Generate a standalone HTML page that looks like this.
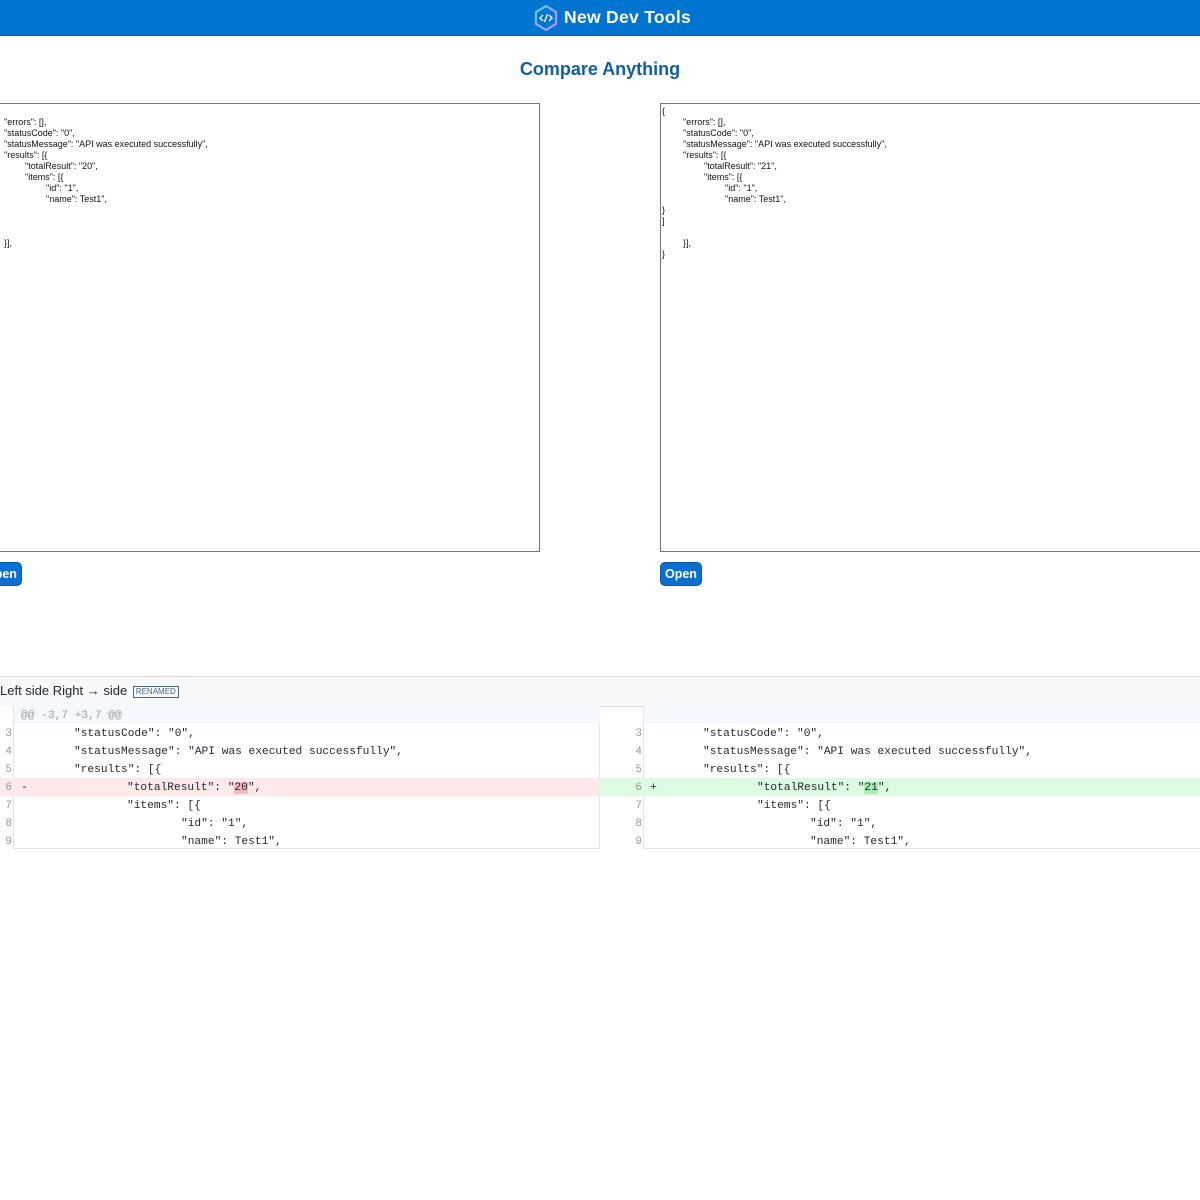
<!DOCTYPE html>
<html><head><meta charset="utf-8"><style>
*{box-sizing:border-box;margin:0;padding:0}
body{width:1200px;height:1200px;overflow:hidden;background:#fff;font-family:"Liberation Sans",sans-serif;position:relative}
.hdr{position:absolute;left:0;top:0;width:1200px;height:36px;background:#0074d1;border-bottom:1px solid #0a5fa8}
.hdr .t{position:absolute;left:564px;top:7px;color:#fff;font-size:17.5px;font-weight:bold;letter-spacing:0.3px}
.hdr svg{position:absolute;left:533px;top:4px}
h1{position:absolute;left:0;width:1200px;top:59px;text-align:center;color:#0f5fa6;font-size:18px;font-weight:bold}
.ta{position:absolute;top:103px;height:449px;border:1px solid #777;background:#fff;overflow:hidden}
.ta pre{position:absolute;font-family:"Liberation Sans",sans-serif;font-size:9px;line-height:11px;color:#111;tab-size:21px;-moz-tab-size:21px}
.btn{position:absolute;top:562px;height:24px;background:#0a6fd0;color:#fff;font-weight:bold;font-size:12.5px;border-radius:5px;line-height:23px;padding:0 4px;border:1px solid #0858a8}
.dh{position:absolute;left:0;top:676px;width:1200px;height:31px;background:#f6f8fa;border-top:1px solid #d8dde2;border-bottom:1px solid #d8dde2;font-size:13px;color:#24292e;line-height:28px}
.tag{display:inline-block;border:1px solid #4a6a80;font-size:8px;line-height:10px;padding:0 2px;color:#4a6a80;vertical-align:1px;margin-left:2px}
.row{position:absolute;height:18px;font-family:"Liberation Mono",monospace;font-size:11.2px;line-height:18px;color:#24292e;white-space:pre}
.num{position:absolute;height:18px;font-family:"Liberation Mono",monospace;font-size:11px;line-height:18px;color:#999;text-align:right}
</style></head><body>
<div class="hdr">
<svg width="26" height="28" viewBox="0 0 26 28"><defs><linearGradient id="g" x1="0" y1="0" x2="1" y2="1"><stop offset="0" stop-color="#5fd0ff"/><stop offset="1" stop-color="#b88aff"/></linearGradient></defs><path d="M13 2 L23 8 L23 20 L13 26 L3 20 L3 8 Z" fill="none" stroke="url(#g)" stroke-width="2.2"/><path d="M10 11 L7 14 L10 17 M16 11 L19 14 L16 17 M14.5 10 L11.5 18" fill="none" stroke="#fff" stroke-width="1.4"/></svg>
<div class="t">New Dev Tools</div></div>
<h1>Compare Anything</h1>
<div class="ta" style="left:-2px;width:542px"><pre style="left:-16px;top:13px">	"errors": [],
	"statusCode": "0",
	"statusMessage": "API was executed successfully",
	"results": [{
		"totalResult": "20",
		"items": [{
			"id": "1",
			"name": Test1",



	}],</pre></div>
<div class="ta" style="left:660px;width:560px"><pre style="left:1px;top:2px">{
	"errors": [],
	"statusCode": "0",
	"statusMessage": "API was executed successfully",
	"results": [{
		"totalResult": "21",
		"items": [{
			"id": "1",
			"name": Test1",
}
]

	}],
}</pre></div>
<div class="btn" style="left:-20px">Open</div>
<div class="btn" style="left:660px">Open</div>
<div class="dh">Left side Right → side <span class="tag">RENAMED</span></div>
<div style="position:absolute;left:0;top:706px;width:14px;height:143px;background:#fff;border-right:1px solid #e1e4e8"></div>
<div style="position:absolute;left:14px;top:706px;width:586px;height:143px;border-right:1px solid #e1e4e8;border-bottom:1px solid #e1e4e8"></div>
<div style="position:absolute;left:600px;top:706px;width:44px;height:143px;border-right:1px solid #e1e4e8"></div>
<div style="position:absolute;left:644px;top:706px;width:556px;height:143px;border-bottom:1px solid #e1e4e8"></div>
<div style="position:absolute;left:14px;top:706px;width:586px;height:18px;background:#f5f8fc"></div>
<div style="position:absolute;left:644px;top:706px;width:556px;height:18px;background:#f5f8fc"></div>
<div style="position:absolute;left:0;top:778px;width:600px;height:18px;background:#fde9ea"></div>
<div style="position:absolute;left:600px;top:778px;width:600px;height:18px;background:#dcfbe1"></div>
<div class="row" style="left:21px;top:707px;color:#9aa0a6">@@ -3,7 +3,7 @@</div>
<div class="num" style="left:0;width:12px;top:725px">3</div><div class="num" style="left:0;width:12px;top:743px">4</div><div class="num" style="left:0;width:12px;top:761px">5</div><div class="num" style="left:0;width:12px;top:779px">6</div><div class="num" style="left:0;width:12px;top:797px">7</div><div class="num" style="left:0;width:12px;top:815px">8</div><div class="num" style="left:0;width:12px;top:833px">9</div>
<div class="num" style="left:600px;width:42px;top:725px">3</div><div class="num" style="left:600px;width:42px;top:743px">4</div><div class="num" style="left:600px;width:42px;top:761px">5</div><div class="num" style="left:600px;width:42px;top:779px">6</div><div class="num" style="left:600px;width:42px;top:797px">7</div><div class="num" style="left:600px;width:42px;top:815px">8</div><div class="num" style="left:600px;width:42px;top:833px">9</div>
<div class="row" style="left:74px;top:725px">"statusCode": "0",</div>
<div class="row" style="left:74px;top:743px">"statusMessage": "API was executed successfully",</div>
<div class="row" style="left:74px;top:761px">"results": [{</div>
<div class="row" style="left:21px;top:779px">-</div>
<div class="row" style="left:127px;top:779px">"totalResult": "<span style="background:#f8b9bf">20</span>",</div>
<div class="row" style="left:127px;top:797px">"items": [{</div>
<div class="row" style="left:181px;top:815px">"id": "1",</div>
<div class="row" style="left:181px;top:833px">"name": Test1",</div>
<div class="row" style="left:703px;top:725px">"statusCode": "0",</div>
<div class="row" style="left:703px;top:743px">"statusMessage": "API was executed successfully",</div>
<div class="row" style="left:703px;top:761px">"results": [{</div>
<div class="row" style="left:650px;top:779px">+</div>
<div class="row" style="left:757px;top:779px">"totalResult": "<span style="background:#a6eeb2">21</span>",</div>
<div class="row" style="left:757px;top:797px">"items": [{</div>
<div class="row" style="left:810px;top:815px">"id": "1",</div>
<div class="row" style="left:810px;top:833px">"name": Test1",</div>
</body></html>
